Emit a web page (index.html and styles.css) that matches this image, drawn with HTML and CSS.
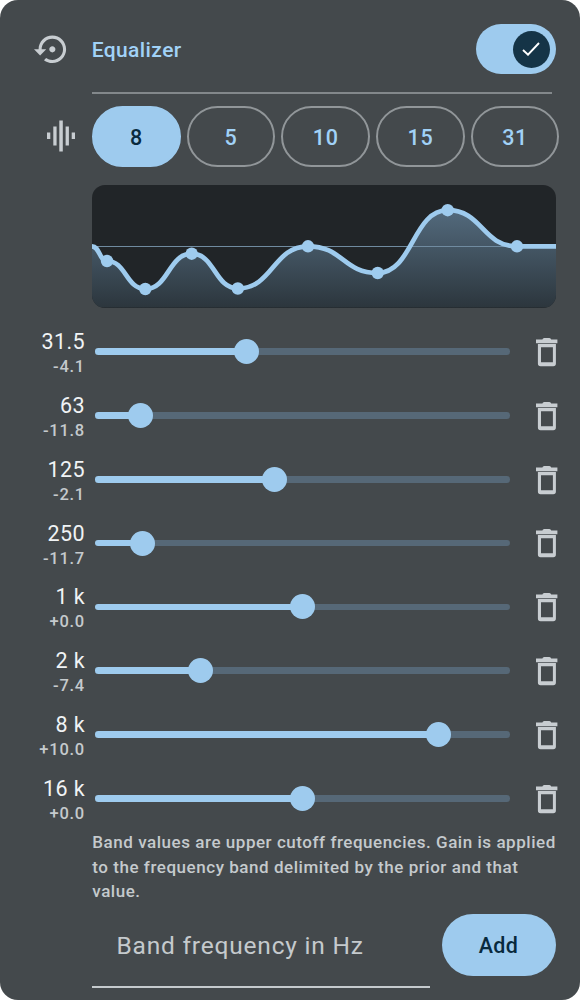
FILE: index.html
```
<!DOCTYPE html>
<html lang="en">
<head>
<meta charset="utf-8">
<title>Equalizer</title>
<link rel="stylesheet" href="styles.css">
</head>
<body>
<svg class="defs" aria-hidden="true">
  <symbol id="trash" viewBox="0 0 24 30">
    <path d="M7.4 1.6q.3-1.6 1.8-1.6h5.2q1.5 0 1.8 1.6h6.2v3.6H1V1.6z"/>
    <path fill-rule="evenodd" d="M2.9 6h18v19.6a2.6 2.6 0 0 1-2.6 2.6H5.5a2.6 2.6 0 0 1-2.6-2.6zM6 9.3v15h11.9v-15z"/>
  </symbol>
</svg>
<main class="card">
  <header class="header">
    <svg class="restore" viewBox="0 0 24 24"><path d="M14 12c0-1.1-.9-2-2-2s-2 .9-2 2 .9 2 2 2 2-.9 2-2zm-2-9c-4.97 0-9 4.03-9 9H0l4 4 4-4H5c0-3.87 3.13-7 7-7s7 3.13 7 7-3.13 7-7 7c-1.51 0-2.91-.49-4.06-1.3l-1.42 1.44C8.04 20.3 9.94 21 12 21c4.97 0 9-4.03 9-9s-4.03-9-9-9z"/></svg>
    <h1 class="title">Equalizer</h1>
    <div class="switch"><div class="knob"><svg class="check" viewBox="0 0 18 14"><path d="M1 8l5 4.7L17 1"/></svg></div></div>
  </header>
  <div class="divider"></div>
  <section class="presets">
    <svg class="wave" viewBox="0 0 28 32"><path d="M0 12.5h3.3v6.5H0zM6.3 6.5h3.3v19H6.3zM12.3.5h3.5v31h-3.5zM18.6 6.5h3.3v19h-3.3zM24.7 12.5H28v6.5h-3.3z"/></svg>
    <div class="chips">
      <button class="chip selected">8</button><button class="chip">5</button><button class="chip">10</button><button class="chip">15</button><button class="chip">31</button>
    </div>
  </section>
  <svg class="graph" viewBox="0 0 464 122.5">
    <defs><linearGradient id="fill" gradientUnits="userSpaceOnUse" x1="0" y1="25" x2="0" y2="122.5"><stop offset="0" stop-color="#536a7d"/><stop offset="1" stop-color="#2c363d"/></linearGradient></defs>
    <path fill="url(#fill)" d="M0 61.3C7.5 61.3 7.5 76 15 76C34 76 34 104 53.3 104C76.5 104 76.5 68.7 99.7 68.7C122.8 68.7 122.8 103.5 145.8 103.5C181 103.5 181 61.3 216 61.3C251 61.3 251 88 285.7 88C320.7 88 320.7 25.2 355.7 25.2C390.3 25.2 390.3 61.3 425 61.3H464V122.5H0z"/>
    <path class="zero" d="M0 61.5H464"/>
    <path class="curve" d="M0 61.3C7.5 61.3 7.5 76 15 76C34 76 34 104 53.3 104C76.5 104 76.5 68.7 99.7 68.7C122.8 68.7 122.8 103.5 145.8 103.5C181 103.5 181 61.3 216 61.3C251 61.3 251 88 285.7 88C320.7 88 320.7 25.2 355.7 25.2C390.3 25.2 390.3 61.3 425 61.3H464"/>
    <g class="points"><circle cx="15" cy="76" r="6.2"/><circle cx="53.3" cy="104" r="6.2"/><circle cx="99.7" cy="68.7" r="6.2"/><circle cx="145.8" cy="103.5" r="6.2"/><circle cx="216" cy="61.3" r="6.2"/><circle cx="285.7" cy="88" r="6.2"/><circle cx="355.7" cy="25.2" r="6.2"/><circle cx="425" cy="61.3" r="6.2"/></g>
  </svg>
  <section class="bands">
    <div class="band"><div class="labels"><span class="freq">31.5</span><span class="gain">-4.1</span></div><div class="slider"><div class="active" style="width:151.7px"></div><div class="thumb"></div><div class="rest"></div></div><svg class="trash"><use href="#trash"/></svg></div>
    <div class="band"><div class="labels"><span class="freq">63</span><span class="gain">-11.8</span></div><div class="slider"><div class="active" style="width:46.3px"></div><div class="thumb"></div><div class="rest"></div></div><svg class="trash"><use href="#trash"/></svg></div>
    <div class="band"><div class="labels"><span class="freq">125</span><span class="gain">-2.1</span></div><div class="slider"><div class="active" style="width:179.6px"></div><div class="thumb"></div><div class="rest"></div></div><svg class="trash"><use href="#trash"/></svg></div>
    <div class="band"><div class="labels"><span class="freq">250</span><span class="gain">-11.7</span></div><div class="slider"><div class="active" style="width:48px"></div><div class="thumb"></div><div class="rest"></div></div><svg class="trash"><use href="#trash"/></svg></div>
    <div class="band"><div class="labels"><span class="freq">1 k</span><span class="gain">+0.0</span></div><div class="slider"><div class="active" style="width:207.5px"></div><div class="thumb"></div><div class="rest"></div></div><svg class="trash"><use href="#trash"/></svg></div>
    <div class="band"><div class="labels"><span class="freq">2 k</span><span class="gain">-7.4</span></div><div class="slider"><div class="active" style="width:106.3px"></div><div class="thumb"></div><div class="rest"></div></div><svg class="trash"><use href="#trash"/></svg></div>
    <div class="band"><div class="labels"><span class="freq">8 k</span><span class="gain">+10.0</span></div><div class="slider"><div class="active" style="width:344.2px"></div><div class="thumb"></div><div class="rest"></div></div><svg class="trash"><use href="#trash"/></svg></div>
    <div class="band"><div class="labels"><span class="freq">16 k</span><span class="gain">+0.0</span></div><div class="slider"><div class="active" style="width:207.5px"></div><div class="thumb"></div><div class="rest"></div></div><svg class="trash"><use href="#trash"/></svg></div>
  </section>
  <p class="note">Band values are upper cutoff frequencies. Gain is applied<br>to the frequency band delimited by the prior and that<br>value.</p>
  <footer class="add-row"><div class="field">Band frequency in Hz</div><button class="add">Add</button></footer>
</main>
</body>
</html>
```
FILE: styles.css
```
* { box-sizing: border-box; }
body { margin: 0; background: #fff; font-family: Roboto, "Liberation Sans", sans-serif; }
.defs { display: none; }
.card { width: 580px; height: 1000px; overflow: hidden; border-radius: 18px; background: #44494c; display: flex; flex-direction: column; }
.header { display: flex; align-items: center; height: 92px; flex: none; padding: 0 24.5px 0 34px; }
.restore { width: 36.7px; height: 36.7px; fill: #c8cdd1; margin-top: 6px; }
.title { margin: 8px 0 0 21px; font-size: 21px; font-weight: 500; letter-spacing: .4px; color: #a1d2f7; }
.switch { margin: 6px 0 0 auto; width: 80px; height: 49.5px; border-radius: 25px; background: #9ecbee; display: flex; align-items: center; justify-content: flex-end; padding-right: 6px; }
.knob { width: 37px; height: 37px; border-radius: 50%; background: #153447; display: flex; align-items: center; justify-content: center; }
.check { width: 18px; height: 14px; fill: none; stroke: #fff; stroke-width: 1.9; }
.divider { height: 1.5px; flex: none; margin: 0 28px 0 92px; background: #83888b; }
.presets { display: flex; align-items: center; height: 61.5px; flex: none; margin: 12px 0 0 47px; }
.wave { width: 28px; height: 32px; fill: #c8cdd1; }
.chips { display: flex; gap: 6px; margin-left: 17px; }
.chip { width: 88.7px; height: 61px; padding: 2px 0 0; border: 2px solid #919699; border-radius: 30.5px; background: none; color: #a1d2f7; font: 500 21.5px Roboto, sans-serif; letter-spacing: .7px; }
.chip.selected { background: #9ecbee; border-color: #9ecbee; color: #082a3d; }
.graph { width: 464px; height: 122.5px; flex: none; margin: 18px 0 0 91.7px; border-radius: 13px; background: #212528; }
.zero { stroke: #708ba0; stroke-width: 1; }
.curve { fill: none; stroke: #9ecbee; stroke-width: 4.7; }
.points { fill: #9ecbee; }
.bands { margin-top: 12.3px; flex: none; }
.band { display: flex; align-items: center; height: 63.8px; padding-right: 21.3px; }
.labels { width: 85px; display: flex; flex-direction: column; align-items: flex-end; padding-top: 5px; }
.freq { font-size: 21.5px; line-height: 25px; letter-spacing: .4px; color: #f0f3f5; }
.gain { font-size: 16.5px; line-height: 25px; font-weight: 500; letter-spacing: .75px; color: #c5cacd; }
.slider { width: 415px; margin-left: 9.7px; display: flex; align-items: center; }
.active { height: 6.5px; border-radius: 3.3px 0 0 3.3px; background: #9ecbee; flex: none; }
.thumb { width: 25px; height: 25px; margin: 0 -12.5px; border-radius: 50%; background: #9ecbee; flex: none; z-index: 1; }
.rest { flex: 1; height: 6.5px; border-radius: 0 3.3px 3.3px 0; background: #566877; }
.trash { width: 24px; height: 30px; margin: 2.8px 0 0 auto; fill: #c8cdd1; }
.note { flex: none; margin: 0 0 0 92.3px; font-size: 17px; line-height: 24.5px; font-weight: 500; letter-spacing: .54px; color: #c5cacd; white-space: nowrap; }
.add-row { display: flex; align-items: flex-start; margin: 10.5px 24.5px 0 92px; }
.field { width: 338px; height: 73.5px; padding: 15.7px 0 0 24.5px; border-bottom: 2px solid #c5cacd; font-size: 24.5px; line-height: 32px; letter-spacing: .8px; color: #c5cacd; }
.add { width: 114px; height: 61.5px; margin-left: auto; padding: 1px 0 0; border: 0; border-radius: 31px; background: #9ecbee; color: #082a3d; font: 500 21.5px Roboto, sans-serif; letter-spacing: .4px; }
```
